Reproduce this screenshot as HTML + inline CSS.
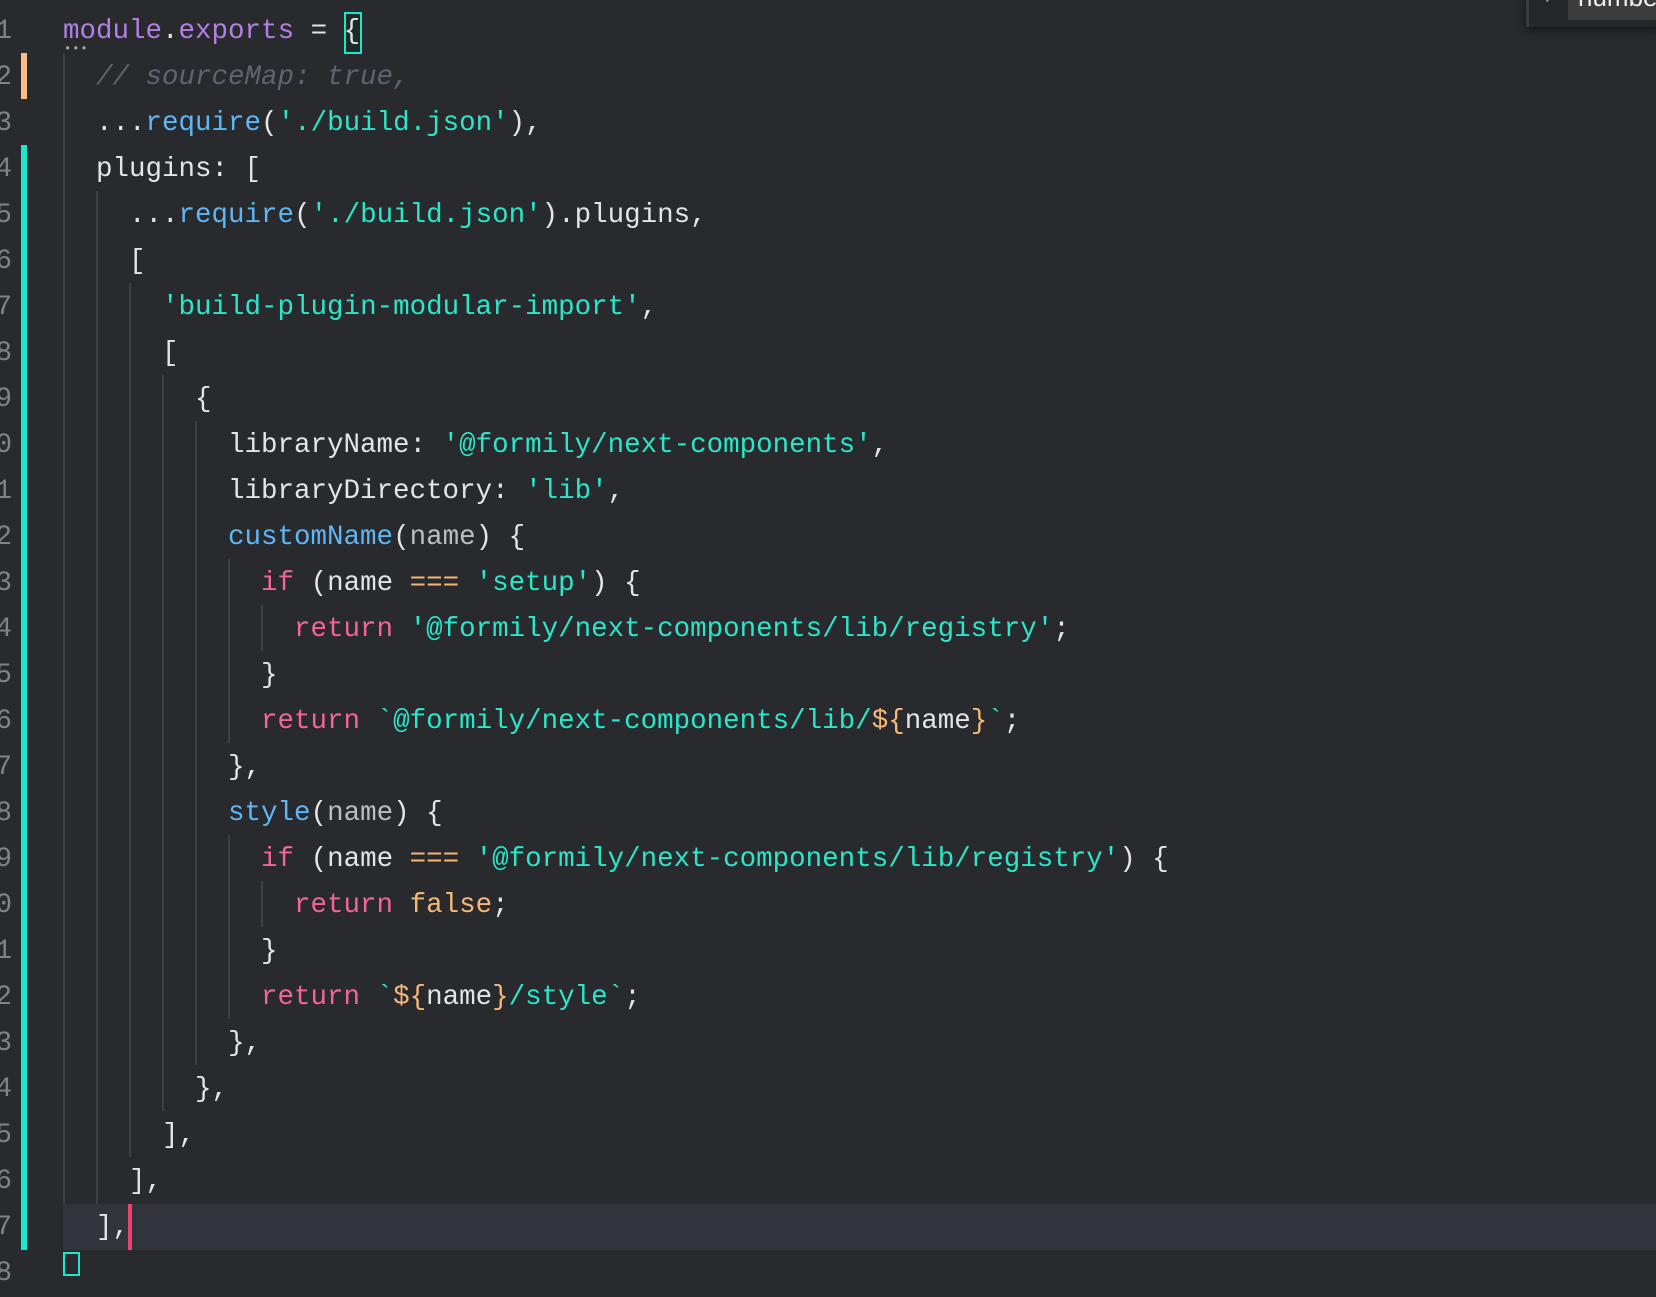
<!DOCTYPE html>
<html><head><meta charset="utf-8"><style>
html,body{margin:0;padding:0;}
body{width:1656px;height:1266px;background:#282a2e;overflow:hidden;position:relative;font-family:"Liberation Mono",monospace;}
.code{position:absolute;left:63px;top:9px;font-size:27.5px;line-height:46px;color:#e4e4e4;white-space:pre;}
.code div{height:46px;}
.ln{position:absolute;left:-60px;top:9px;width:72px;text-align:right;font-size:27.5px;line-height:46px;color:#7f838a;white-space:pre;}
.p{color:#b180e4}.s{color:#2be6c8}.f{color:#5fb6f5}.k{color:#f2649b}.o{color:#f7b877}.c{color:#5f6470;font-style:italic}.g{color:#bdbdbd}
.guide{position:absolute;width:2px;background:#3c4048;}
.bar{position:absolute;left:21px;width:6px;}
</style></head><body>
<div style="position:absolute;left:63px;top:1204px;width:1593px;height:46px;background:#31343a;"></div>
<div style="position:absolute;left:128px;top:1204px;width:4px;height:46px;background:#f0406e;"></div>
<div class="bar" style="top:53px;height:46px;background:#f9bd84;"></div>
<div class="bar" style="top:145px;height:1105px;background:#19e8cd;"></div>
<div class="guide" style="left:63px;top:53px;height:1151px;"></div>
<div class="guide" style="left:96px;top:191px;height:1013px;"></div>
<div class="guide" style="left:129px;top:283px;height:874px;"></div>
<div class="guide" style="left:162px;top:375px;height:736px;"></div>
<div class="guide" style="left:195px;top:421px;height:644px;"></div>
<div class="guide" style="left:228px;top:559px;height:184px;"></div>
<div class="guide" style="left:228px;top:835px;height:184px;"></div>
<div class="guide" style="left:261px;top:605px;height:46px;"></div>
<div class="guide" style="left:261px;top:881px;height:46px;"></div>
<div style="position:absolute;left:64px;top:46px;color:#aaa;font-size:12px;line-height:6px;letter-spacing:1px;">•••</div>
<div style="position:absolute;left:344px;top:12px;width:14px;height:38px;border:2px solid #19e8cd;background:#1c2a28;"></div>
<div style="position:absolute;left:63px;top:1252px;width:13px;height:20px;border:2px solid #19e8cd;"></div>
<div class="ln">1
2
3
4
5
6
7
8
9
10
11
12
13
14
15
16
17
18
19
20
21
22
23
24
25
26
27
28</div>
<div class="code"><div><span class="p">module</span>.<span class="p">exports</span> = {</div><div>  <span class="c">// sourceMap: true,</span></div><div>  ...<span class="f">require</span>(<span class="s">'./build.json'</span>),</div><div>  plugins: [</div><div>    ...<span class="f">require</span>(<span class="s">'./build.json'</span>).plugins,</div><div>    [</div><div>      <span class="s">'build-plugin-modular-import'</span>,</div><div>      [</div><div>        {</div><div>          libraryName: <span class="s">'@formily/next-components'</span>,</div><div>          libraryDirectory: <span class="s">'lib'</span>,</div><div>          <span class="f">customName</span>(<span class="g">name</span>) {</div><div>            <span class="k">if</span> (name <span class="o">===</span> <span class="s">'setup'</span>) {</div><div>              <span class="k">return</span> <span class="s">'@formily/next-components/lib/registry'</span>;</div><div>            }</div><div>            <span class="k">return</span> <span class="s">`@formily/next-components/lib/</span><span class="o">${</span>name<span class="o">}</span><span class="s">`</span>;</div><div>          },</div><div>          <span class="f">style</span>(<span class="g">name</span>) {</div><div>            <span class="k">if</span> (name <span class="o">===</span> <span class="s">'@formily/next-components/lib/registry'</span>) {</div><div>              <span class="k">return</span> <span class="o">false</span>;</div><div>            }</div><div>            <span class="k">return</span> <span class="s">`</span><span class="o">${</span>name<span class="o">}</span><span class="s">/style`</span>;</div><div>          },</div><div>        },</div><div>      ],</div><div>    ],</div><div>  ],</div></div>
<div style="position:absolute;left:1526px;top:0;width:130px;height:27px;background:#25272a;border-left:3px solid #383b44;box-shadow:0 2px 10px rgba(0,0,0,0.6);"></div>
<div style="position:absolute;left:1545px;top:-14px;color:#bbb;font-family:'Liberation Sans',sans-serif;font-size:20px;">›</div>
<div style="position:absolute;left:1568px;top:0;width:88px;height:20px;background:#3c3c3c;overflow:hidden;"><div style="position:absolute;left:10px;top:-18px;color:#eee;font-family:'Liberation Sans',sans-serif;font-size:26px;">number</div></div>
</body></html>
